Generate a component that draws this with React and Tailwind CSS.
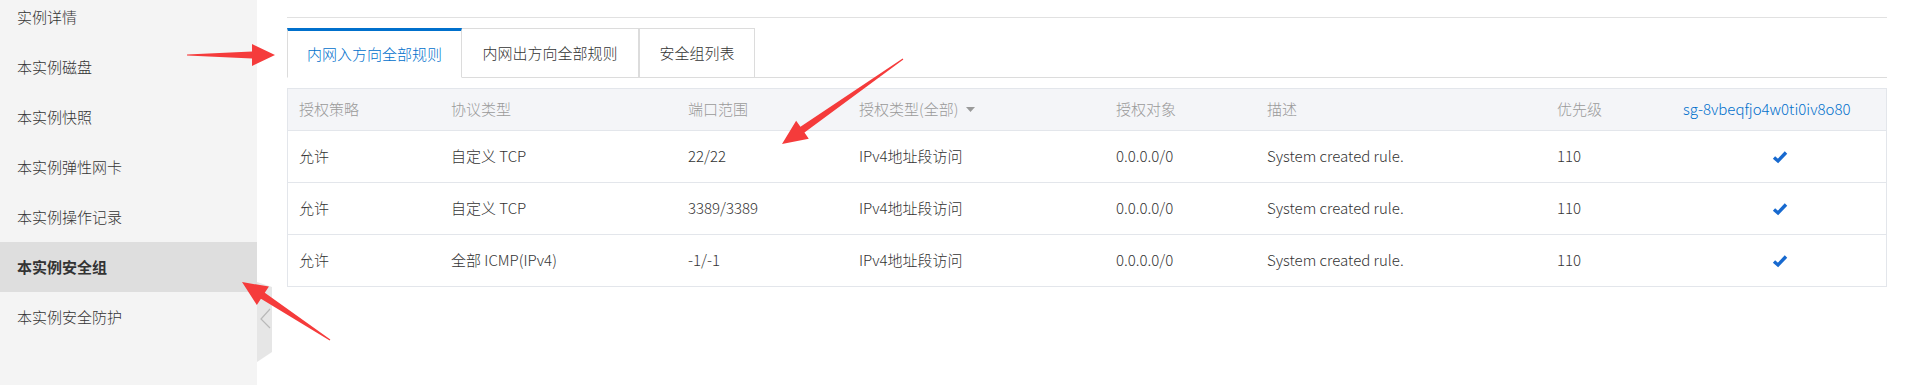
import React from "react";

const menu = [
  "实例详情",
  "本实例磁盘",
  "本实例快照",
  "本实例弹性网卡",
  "本实例操作记录",
  "本实例安全组",
  "本实例安全防护",
];

const rules = [
  { policy: "允许", proto: "自定义 TCP", port: "22/22" },
  { policy: "允许", proto: "自定义 TCP", port: "3389/3389" },
  { policy: "允许", proto: "全部 ICMP(IPv4)", port: "-1/-1" },
];

// column widths copied from the console layout
const cols = "grid grid-cols-[152px_237px_171px_257px_151px_290px_125px_217px]";

// builds a tapered arrow polygon from tail to tip
const arrowPoints = (x1, y1, x2, y2, headLen, headHalf, shaftHalf, tailHalf) => {
  const dx = x2 - x1;
  const dy = y2 - y1;
  const len = Math.hypot(dx, dy);
  const ux = dx / len;
  const uy = dy / len;
  const nx = -uy;
  const ny = ux;
  const bx = x2 - ux * headLen;
  const by = y2 - uy * headLen;
  const pts = [
    [x1 + nx * tailHalf, y1 + ny * tailHalf],
    [bx + nx * shaftHalf, by + ny * shaftHalf],
    [bx + nx * headHalf, by + ny * headHalf],
    [x2, y2],
    [bx - nx * headHalf, by - ny * headHalf],
    [bx - nx * shaftHalf, by - ny * shaftHalf],
    [x1 - nx * tailHalf, y1 - ny * tailHalf],
  ];
  return pts.map((p) => p.join(",")).join(" ");
};

const Check = () => (
  <svg width="16" height="14" viewBox="0 0 16 14">
    <path d="M2 7.5 L6 11 L14 2.5" fill="none" stroke="#1769cf" strokeWidth="3.4" strokeLinejoin="miter" />
  </svg>
);

export default function App() {
  return (
    <div
      className="relative flex h-[385px] w-[1917px] overflow-hidden bg-white text-[15px] font-light text-[#333]"
      style={{ fontFamily: '"Noto Sans CJK SC", "Noto Sans", sans-serif' }}
    >
      {/* left menu */}
      <div className="relative h-full w-[257px] shrink-0 bg-[#f4f4f4]">
        <div className="-mt-2 flex flex-col">
          {menu.map((item) => (
            <div
              key={item}
              className={
                item === "本实例安全组"
                  ? "flex h-[50px] items-center bg-[#dedede] pl-[17px] font-bold text-[#333]"
                  : "flex h-[50px] items-center pl-[17px] text-[#333]"
              }
            >
              {item}
            </div>
          ))}
        </div>
        <svg className="absolute left-[257px] top-[280px]" width="15" height="84" viewBox="0 0 15 84">
          <polygon points="0,2 15,7 15,72 0,82" fill="#e6e6e6" />
          <polyline points="13,29 4,39 13,48" fill="none" stroke="#b9b9b9" strokeWidth="1.2" />
        </svg>
      </div>

      {/* main */}
      <div className="ml-[30px] w-[1600px] pt-[17px]">
        <div className="border-t border-[#e1e1e1]" />

        <div className="mt-[10px] flex h-[50px] border-b border-[#dcdcdc]">
          <div className="-mb-px flex h-[50px] w-[175px] items-center justify-center border-x border-t-[3px] border-b border-x-[#dcdcdc] border-t-[#0070cc] border-b-white bg-white text-[#0070cc]">
            内网入方向全部规则
          </div>
          <div className="-mb-px flex h-[50px] w-[177px] items-center justify-center border-t border-r border-b border-[#dcdcdc] text-[#333]">
            内网出方向全部规则
          </div>
          <div className="-mb-px flex h-[50px] w-[116px] items-center justify-center border-t border-r border-l border-b border-[#dcdcdc] text-[#333]">
            安全组列表
          </div>
        </div>

        <div className="mt-[10px] border-x border-t border-[#e3e6eb]">
          <div className={`${cols} h-[42px] items-center border-b border-[#e3e6eb] bg-[#f4f5f8] text-[#9a9a9a]`}>
            <div className="pl-[11px]">授权策略</div>
            <div className="pl-[11px]">协议类型</div>
            <div className="pl-[11px]">端口范围</div>
            <div className="flex items-center pl-[11px]">
              授权类型(全部)
              <svg className="ml-[8px]" width="9" height="6" viewBox="0 0 9 6">
                <polygon points="0,0 9,0 4.5,5" fill="#9a9a9a" />
              </svg>
            </div>
            <div className="pl-[11px]">授权对象</div>
            <div className="pl-[11px]">描述</div>
            <div className="pl-[11px]">优先级</div>
            <div className="pl-[12px] text-[#0070cc]">sg-8vbeqfjo4w0ti0iv8o80</div>
          </div>

          {rules.map((r, i) => (
            <div key={i} className={`${cols} h-[52px] items-center border-b border-[#e3e6eb] text-[#333]`}>
              <div className="pl-[11px]">{r.policy}</div>
              <div className="pl-[11px]">{r.proto}</div>
              <div className="pl-[11px]">{r.port}</div>
              <div className="pl-[11px]">IPv4地址段访问</div>
              <div className="pl-[11px]">0.0.0.0/0</div>
              <div className="pl-[11px]">System created rule.</div>
              <div className="pl-[11px]">110</div>
              <div className="flex justify-center">
                <Check />
              </div>
            </div>
          ))}
        </div>
      </div>

      {/* red annotation arrows */}
      <svg className="pointer-events-none absolute left-0 top-0" width="1917" height="385" viewBox="0 0 1917 385">
        <polygon points={arrowPoints(187, 55, 275, 55, 23, 11, 3.5, 0.6)} fill="#f53b3b" />
        <polygon points={arrowPoints(903, 59, 782, 144, 25, 11, 3.5, 0.6)} fill="#f53b3b" />
        <polygon points={arrowPoints(330, 340, 242, 282, 25, 11, 3.5, 0.6)} fill="#f53b3b" />
      </svg>
    </div>
  );
}
